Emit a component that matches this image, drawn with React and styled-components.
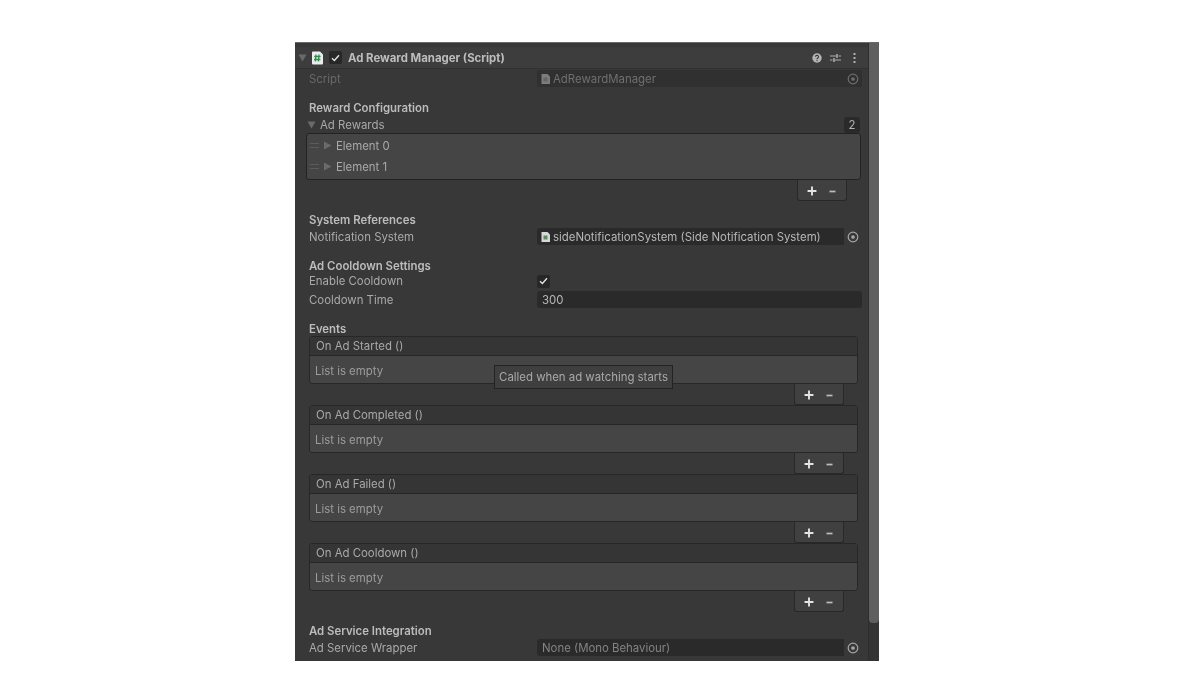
import React from "react";
import styled, { createGlobalStyle } from "styled-components";

const Global = createGlobalStyle`
  html, body { margin: 0; padding: 0; background: #fff; }
  body { font-family: Inter, "Liberation Sans", sans-serif; }
`;

const Page = styled.div`
  width: 1200px;
  height: 675px;
  padding: 42px 0 0 295px;
  box-sizing: border-box;
  overflow: hidden;
`;

const Panel = styled.main`
  width: 584px;
  height: 619px;
  display: flex;
  background: #383838;
  border-top: 1px solid #6a6a6a;
  box-sizing: border-box;
  filter: blur(0.4px);
`;

const Content = styled.div`
  width: 573px;
  display: flex;
  flex-direction: column;
  padding-top: 4px;
  box-sizing: border-box;
`;

const Scrollbar = styled.div`
  width: 11px;
  background: #343434;
  border-left: 1px solid #2e2e2e;
  box-sizing: border-box;
`;

const Thumb = styled.div`
  height: 580px;
  background: #5f5f5f;
  border-radius: 0 0 4px 4px;
`;

const Header = styled.header`
  height: 21px;
  display: flex;
  align-items: center;
  background: #3d3d3d;
  padding-left: 3px;
  padding-right: 4px;
  border-bottom: 1px solid #313131;
  margin-bottom: 1px;
`;

const HeaderIcon = styled.span`
  display: flex;
  margin-left: ${(p) => p.$left || 0}px;
`;

const Title = styled.span`
  font-size: 11.4px;
  font-weight: 700;
  color: #bdbdbd;
  margin-left: 6px;
  flex: 1;
`;

const IconCell = styled.span`
  width: 19px;
  display: flex;
  justify-content: center;
`;

const Section = styled.div`
  height: ${(p) => p.$h || 15}px;
  line-height: ${(p) => p.$h || 15}px;
  font-size: 11.4px;
  font-weight: 600;
  color: #bcbcbc;
  padding-left: 14px;
  margin-top: ${(p) => p.$top || 0}px;
`;

const Row = styled.div`
  display: grid;
  grid-template-columns: 228px 325px;
  align-items: center;
  height: ${(p) => p.$h || 17}px;
  padding-left: 14px;
  margin-top: ${(p) => p.$top || 0}px;
`;

const Label = styled.span`
  font-size: 11.4px;
  color: ${(p) => (p.$dim ? "#696969" : "#a9a9a9")};
`;

const Field = styled.div`
  height: 17px;
  display: flex;
  align-items: center;
  border-radius: 3px;
  background: ${(p) => (p.$dim ? "#303030" : "#2a2a2a")};
  padding-left: ${(p) => (p.$icon ? 4 : 5)}px;
  font-size: 11.4px;
  color: ${(p) => (p.$dim ? "#6f6f6f" : p.$none ? "#848484" : "#b9b9b9")};
  box-sizing: border-box;
`;

const FieldText = styled.span`
  flex: 1;
  margin-left: ${(p) => (p.$icon ? 3 : 0)}px;
  white-space: nowrap;
`;

const PickerCell = styled.span`
  width: 18px;
  height: 17px;
  display: flex;
  align-items: center;
  justify-content: center;
  background: ${(p) => (p.$dim ? "#303030" : "#383838")};
  border-radius: 0 3px 3px 0;
`;

const CheckBox = styled.span`
  width: 13px;
  height: 13px;
  display: flex;
  align-items: center;
  justify-content: center;
  background: #272727;
  border-radius: 2px;
  margin-left: ${(p) => p.$left || 0}px;
`;

const ListHeadRow = styled.div`
  height: 17px;
  display: flex;
  align-items: center;
  padding-left: 12px;
  padding-right: 8px;
`;

const ListTitle = styled.span`
  flex: 1;
  margin-left: 4px;
  font-size: 11.4px;
  color: #a9a9a9;
`;

const Count = styled.span`
  width: 16px;
  height: 16px;
  display: flex;
  align-items: center;
  justify-content: center;
  background: #2a2a2a;
  border-radius: 3px;
  font-size: 11.4px;
  color: #b5b5b5;
`;

const ArrayBox = styled.div`
  width: 555px;
  height: 47px;
  margin-left: 11px;
  padding-top: 1px;
  background: #454545;
  border: 1px solid #232323;
  border-radius: 3px;
  box-sizing: border-box;
  display: flex;
  flex-direction: column;
`;

const ElementRow = styled.div`
  height: 21px;
  display: flex;
  align-items: center;
  padding-left: 3px;
`;

const Grip = styled.span`
  width: 9px;
  height: 3px;
  border-top: 1px solid #5c5c5c;
  border-bottom: 1px solid #5c5c5c;
  margin-right: 4px;
`;

const ElementLabel = styled.span`
  font-size: 11.4px;
  color: #a9a9a9;
  margin-left: 4px;
`;

const Footer = styled.div`
  display: flex;
  justify-content: flex-end;
  padding-right: ${(p) => p.$right}px;
`;

const PlusMinus = styled.div`
  width: 50px;
  height: 21px;
  display: flex;
  align-items: center;
  padding: 2px 0 0 9px;
  gap: 12px;
  background: #404040;
  border: 1px solid #282828;
  border-top: none;
  border-radius: 0 0 3px 3px;
  box-sizing: border-box;
`;

const EventBox = styled.section`
  width: 549px;
  height: 48px;
  margin-left: 14px;
  display: flex;
  flex-direction: column;
  border: 1px solid #272727;
  border-radius: 3px;
  box-sizing: border-box;
  background: #454545;
  position: relative;
`;

const EventHead = styled.div`
  height: 18px;
  display: flex;
  align-items: center;
  padding-left: 6px;
  background: #353535;
  border-bottom: 1px solid #262626;
  font-size: 11.4px;
  color: #a9a9a9;
`;

const EventBody = styled.div`
  flex: 1;
  display: flex;
  align-items: center;
  padding-left: 5px;
  padding-top: 3px;
  font-size: 11.4px;
  color: #9c9c9c;
`;

const Tooltip = styled.div`
  position: absolute;
  left: 184px;
  top: 28px;
  width: 179px;
  height: 24px;
  display: flex;
  align-items: center;
  justify-content: center;
  white-space: nowrap;
  background: #3f3f3f;
  border: 1px solid #232323;
  box-sizing: border-box;
  font-size: 11.4px;
  color: #a9a9a9;
`;

const Tri = ({ open, color = "#6a6a6a" }) => (
  <svg width="9" height="9" viewBox="0 0 9 9">
    {open ? <path d="M0.5 1.5H8.5L4.5 8.5Z" fill={color} /> : <path d="M1 0.5L8.5 4.5L1 8.5Z" fill={color} />}
  </svg>
);

const Doc = ({ dim }) => (
  <svg width="9" height="10" viewBox="0 0 9 10">
    <path d="M0.5 0H6.5L9 2.5V10H0.5Z" fill={dim ? "#7c7c7c" : "#d8d8d8"} />
    <rect x="2.5" y="3.5" width="4" height="4" fill={dim ? "#5d6a60" : "#5d8a68"} />
  </svg>
);

const ScriptIcon = () => (
  <svg width="13" height="14" viewBox="0 0 13 14">
    <path d="M1 1.5a1 1 0 0 1 1-1H9L12 3.5V12.5a1 1 0 0 1-1 1H2a1 1 0 0 1-1-1Z" fill="#ececec" />
    <path d="M5 3.5L4.4 10.5M8 3.5L7.4 10.5M3.2 5.5H9.6M3 8.5H9.4" stroke="#2f8f4e" strokeWidth="1.3" fill="none" />
  </svg>
);

const Check = () => (
  <svg width="9" height="8" viewBox="0 0 9 8">
    <path d="M1 4.2L3.4 6.4L8 1.2" stroke="#e2e2e2" strokeWidth="1.4" fill="none" />
  </svg>
);

const Picker = ({ dim }) => (
  <svg width="12" height="12" viewBox="0 0 11 11">
    <circle cx="5.5" cy="5.5" r="4.4" fill="none" stroke={dim ? "#6c6c6c" : "#a6a6a6"} strokeWidth="1.1" />
    <circle cx="5.5" cy="5.5" r="1.7" fill={dim ? "#6c6c6c" : "#a6a6a6"} />
  </svg>
);

const Help = () => (
  <svg width="10" height="10" viewBox="0 0 10 10">
    <circle cx="5" cy="5" r="4.7" fill="#b4b4b4" />
    <path d="M3.5 3.8a1.5 1.4 0 1 1 2.3 1.2C5.2 5.4 5 5.6 5 6.3" stroke="#383838" strokeWidth="1.1" fill="none" />
    <rect x="4.5" y="7" width="1" height="1.1" fill="#383838" />
  </svg>
);

const Sliders = () => (
  <svg width="11" height="10" viewBox="0 0 11 10">
    <path d="M0 3H6M8.5 3H11M0 7H2.5M5 7H11" stroke="#b0b0b0" strokeWidth="1.2" />
    <path d="M7 1V5M4 5V9" stroke="#b0b0b0" strokeWidth="1.5" />
  </svg>
);

const Dots = () => (
  <svg width="3" height="10" viewBox="0 0 3 10">
    <rect x="0.5" y="0" width="2" height="2" fill="#b0b0b0" />
    <rect x="0.5" y="4" width="2" height="2" fill="#b0b0b0" />
    <rect x="0.5" y="8" width="2" height="2" fill="#b0b0b0" />
  </svg>
);

const Plus = () => (
  <svg width="10" height="10" viewBox="0 0 9 9">
    <path d="M4.5 0.5V8.5M0.5 4.5H8.5" stroke="#e4e4e4" strokeWidth="1.7" />
  </svg>
);

const Minus = () => (
  <svg width="7" height="9" viewBox="0 0 7 9">
    <path d="M0.5 4.5H6.5" stroke="#bdbdbd" strokeWidth="1.7" />
  </svg>
);

const AddRemove = ({ right }) => (
  <Footer $right={right}>
    <PlusMinus>
      <Plus />
      <Minus />
    </PlusMinus>
  </Footer>
);

const events = ["On Ad Started ()", "On Ad Completed ()", "On Ad Failed ()", "On Ad Cooldown ()"];

export default function App() {
  return (
    <Page>
      <Global />
      <Panel>
        <Content>
          <Header>
            <Tri open />
            <HeaderIcon $left={4}>
              <ScriptIcon />
            </HeaderIcon>
            <CheckBox $left={5}>
              <Check />
            </CheckBox>
            <Title>Ad Reward Manager (Script)</Title>
            <IconCell><Help /></IconCell>
            <IconCell><Sliders /></IconCell>
            <IconCell><Dots /></IconCell>
          </Header>
          <Row>
            <Label $dim>Script</Label>
            <Field $dim $icon>
              <Doc dim />
              <FieldText $icon>AdRewardManager</FieldText>
              <PickerCell $dim>
                <Picker dim />
              </PickerCell>
            </Field>
          </Row>
          <Section $top={14}>Reward Configuration</Section>
          <ListHeadRow>
            <Tri open />
            <ListTitle>Ad Rewards</ListTitle>
            <Count>2</Count>
          </ListHeadRow>
          <ArrayBox>
            {[0, 1].map((i) => (
              <ElementRow key={i}>
                <Grip />
                <Tri />
                <ElementLabel>Element {i}</ElementLabel>
              </ElementRow>
            ))}
          </ArrayBox>
          <AddRemove right={21} />
          <Section $top={12}>System References</Section>
          <Row>
            <Label>Notification System</Label>
            <Field $icon>
              <Doc />
              <FieldText $icon>sideNotificationSystem (Side Notification System)</FieldText>
              <PickerCell>
                <Picker />
              </PickerCell>
            </Field>
          </Row>
          <Section $top={14} $h={14}>Ad Cooldown Settings</Section>
          <Row $h={16}>
            <Label>Enable Cooldown</Label>
            <CheckBox>
              <Check />
            </CheckBox>
          </Row>
          <Row $top={2}>
            <Label>Cooldown Time</Label>
            <Field>
              <FieldText>300</FieldText>
            </Field>
          </Row>
          <Section $top={14} $h={14}>Events</Section>
          {events.map((e, i) => (
            <React.Fragment key={e}>
              <EventBox>
                <EventHead>{e}</EventHead>
                <EventBody>List is empty</EventBody>
                {i === 0 && <Tooltip>Called when ad watching starts</Tooltip>}
              </EventBox>
              <AddRemove right={24} />
            </React.Fragment>
          ))}
          <Section $top={12}>Ad Service Integration</Section>
          <Row>
            <Label>Ad Service Wrapper</Label>
            <Field $none>
              <FieldText>None (Mono Behaviour)</FieldText>
              <PickerCell>
                <Picker />
              </PickerCell>
            </Field>
          </Row>
        </Content>
        <Scrollbar>
          <Thumb />
        </Scrollbar>
      </Panel>
    </Page>
  );
}
